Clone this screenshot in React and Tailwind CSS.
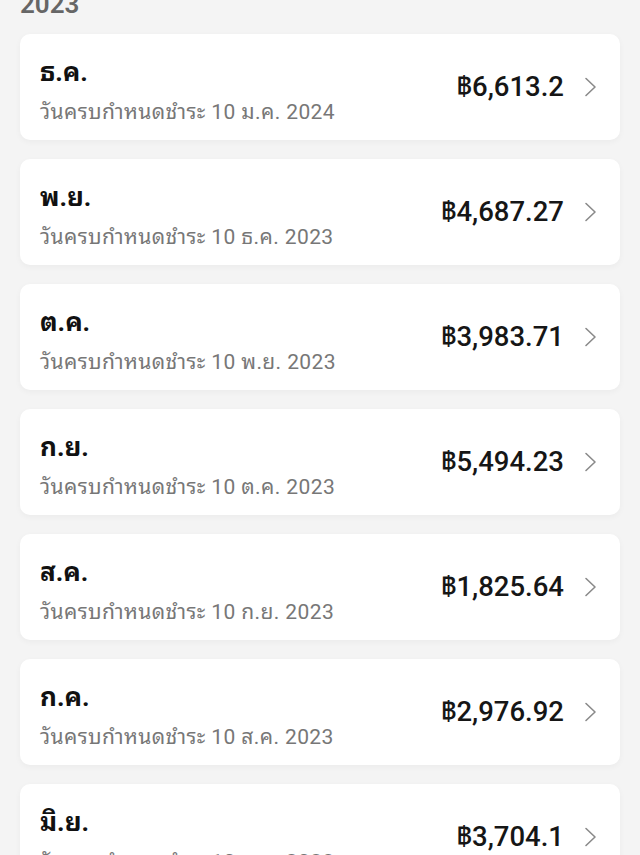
import React from 'react';

const bills = [
  { month: 'ธ.ค.', due: 'วันครบกำหนดชำระ 10 ม.ค. 2024', amount: '฿6,613.2' },
  { month: 'พ.ย.', due: 'วันครบกำหนดชำระ 10 ธ.ค. 2023', amount: '฿4,687.27' },
  { month: 'ต.ค.', due: 'วันครบกำหนดชำระ 10 พ.ย. 2023', amount: '฿3,983.71' },
  { month: 'ก.ย.', due: 'วันครบกำหนดชำระ 10 ต.ค. 2023', amount: '฿5,494.23' },
  { month: 'ส.ค.', due: 'วันครบกำหนดชำระ 10 ก.ย. 2023', amount: '฿1,825.64' },
  { month: 'ก.ค.', due: 'วันครบกำหนดชำระ 10 ส.ค. 2023', amount: '฿2,976.92' },
  { month: 'มิ.ย.', due: 'วันครบกำหนดชำระ 10 ก.ค. 2023', amount: '฿3,704.1' },
];

const Chevron = () => (
  <svg className="h-[20px] w-[13px] shrink-0" viewBox="0 0 13 20" fill="none" stroke="#8a8a8a" strokeWidth={1.6} strokeLinecap="round" strokeLinejoin="round">
    <path d="M2 1.5l9 8.5-9 8.5" />
  </svg>
);

const BillCard = ({ bill }) => (
  <div className="flex h-[106px] items-center justify-between rounded-[10px] bg-white pl-5 pr-[23px] shadow-[0_2px_6px_rgba(0,0,0,0.04)]">
    <div className="flex flex-col pt-[9px]">
      <div className="text-[26px] font-bold leading-[30px] text-[#111]">{bill.month}</div>
      <div className="mt-[11px] text-[21px] leading-[28px] tracking-[0.4px] text-[#777]">{bill.due}</div>
    </div>
    <div className="flex items-center gap-[20px]">
      <span className="text-[27.5px] font-medium text-[#161616]">{bill.amount}</span>
      <Chevron />
    </div>
  </div>
);

export default function App() {
  return (
    <div className="h-[855px] overflow-hidden bg-[#f4f4f4] px-5 font-['Roboto','Noto_Sans_Thai_Looped',sans-serif]">
      <div className="-mt-[11px] text-[26px] font-semibold leading-[30px] text-[#666]">2023</div>
      <div className="mt-[15px] flex flex-col gap-[19px]">
        {bills.map((b) => (
          <BillCard key={b.month} bill={b} />
        ))}
      </div>
    </div>
  );
}
